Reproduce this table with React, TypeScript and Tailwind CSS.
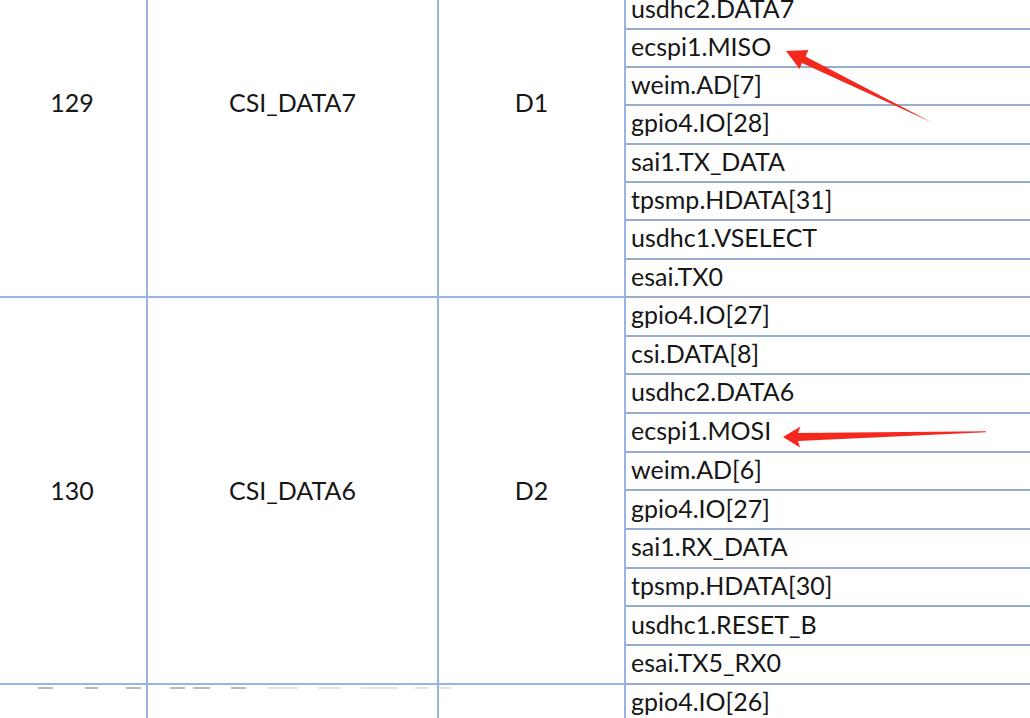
import React from "react";

type Group = { num: string; name: string; ball: string; rows: string[]; rowH: string; shift: string };

const groups: Group[] = [
  {
    num: "129",
    name: "CSI_DATA7",
    ball: "D1",
    rowH: "h-[38.3px]",
    shift: "pb-[6px]",
    rows: [
      "gpio4.IO[28]",
      "csi.DATA[9]",
      "usdhc2.DATA7",
      "ecspi1.MISO",
      "weim.AD[7]",
      "gpio4.IO[28]",
      "sai1.TX_DATA",
      "tpsmp.HDATA[31]",
      "usdhc1.VSELECT",
      "esai.TX0",
    ],
  },
  {
    num: "130",
    name: "CSI_DATA6",
    ball: "D2",
    rowH: "h-[38.7px]",
    shift: "pb-[0px]",
    rows: [
      "gpio4.IO[27]",
      "csi.DATA[8]",
      "usdhc2.DATA6",
      "ecspi1.MOSI",
      "weim.AD[6]",
      "gpio4.IO[27]",
      "sai1.RX_DATA",
      "tpsmp.HDATA[30]",
      "usdhc1.RESET_B",
      "esai.TX5_RX0",
    ],
  },
  {
    num: "131",
    name: "CSI_DATA5",
    ball: "D3",
    rowH: "h-[38.7px]",
    shift: "pb-[0px]",
    rows: [
      "gpio4.IO[26]",
      "csi.DATA[7]",
      "usdhc2.DATA5",
      "ecspi1.SCLK",
      "weim.AD[5]",
      "gpio4.IO[26]",
      "sai1.TX_SYNC",
      "tpsmp.HDATA[29]",
      "usdhc1.CD_B",
      "esai.TX4_RX1",
    ],
  },
];

function GroupBlock({ g, idx }: { g: Group; idx: number }) {
  return (
    <div className="relative flex">
      <div
        className={`w-[150px] shrink-0 flex items-center justify-center border-r-2 border-b-2 border-[#99b4e0] ${g.shift}`}
      >
        {g.num}
      </div>
      <div
        className={`w-[291px] shrink-0 flex items-center justify-center border-r-2 border-b-2 border-[#99b4e0] ${g.shift}`}
      >
        {g.name}
      </div>
      <div
        className={`w-[187px] shrink-0 flex items-center justify-center border-r-2 border-b-2 border-[#99b4e0] ${g.shift}`}
      >
        {g.ball}
      </div>
      <div className="flex-1 flex flex-col">
        {g.rows.map((r, i) => (
          <div
            key={i}
            className={`${g.rowH} flex items-center pl-[5px] pb-[3px] border-b-2 border-[#98adce] whitespace-nowrap`}
          >
            {r}
          </div>
        ))}
      </div>
      {idx === 2 && (
        <svg
          className="absolute left-0 top-0"
          width="470"
          height="8"
          viewBox="0 0 470 8"
        >
          <g stroke="#7d828c" strokeWidth="2" opacity="0.55">
            <line x1="40" y1="3" x2="55" y2="3" />
            <line x1="87" y1="3" x2="100" y2="3" />
            <line x1="128" y1="3" x2="143" y2="3" />
            <line x1="172" y1="3" x2="187" y2="3" />
            <line x1="195" y1="3" x2="212" y2="3" />
            <line x1="233" y1="3" x2="248" y2="3" />
          </g>
          <g stroke="#b0b8c6" strokeWidth="1.5" opacity="0.5">
            <line x1="270" y1="3" x2="300" y2="3" />
            <line x1="320" y1="3" x2="343" y2="3" />
            <line x1="363" y1="3" x2="400" y2="3" />
            <line x1="417" y1="3" x2="430" y2="3" />
            <line x1="440" y1="3" x2="453" y2="3" />
          </g>
        </svg>
      )}
    </div>
  );
}

export default function App() {
  return (
    <div
      className="relative w-[1030px] h-[718px] overflow-hidden bg-white text-[25px] text-[#161616]"
      style={{ fontFamily: "Lato, 'Open Sans', sans-serif" }}
    >
      <div className="mt-[-85px] ml-[-2px] w-[1100px] flex flex-col">
        {groups.map((g, i) => (
          <GroupBlock key={i} g={g} idx={i} />
        ))}
      </div>
      <svg
        className="absolute left-0 top-0 pointer-events-none"
        width="1030"
        height="718"
        viewBox="0 0 1030 718"
      >
        <polygon
          fill="#f5281e"
          points="786,51 808.5,50 805.5,56.5 932,122.5 802,63 799.5,69"
        />
        <polygon
          fill="#f5281e"
          points="783,437 800.5,426.5 798,433 986,431.3 986,432.3 798,441 800,447.5"
        />
      </svg>
    </div>
  );
}
